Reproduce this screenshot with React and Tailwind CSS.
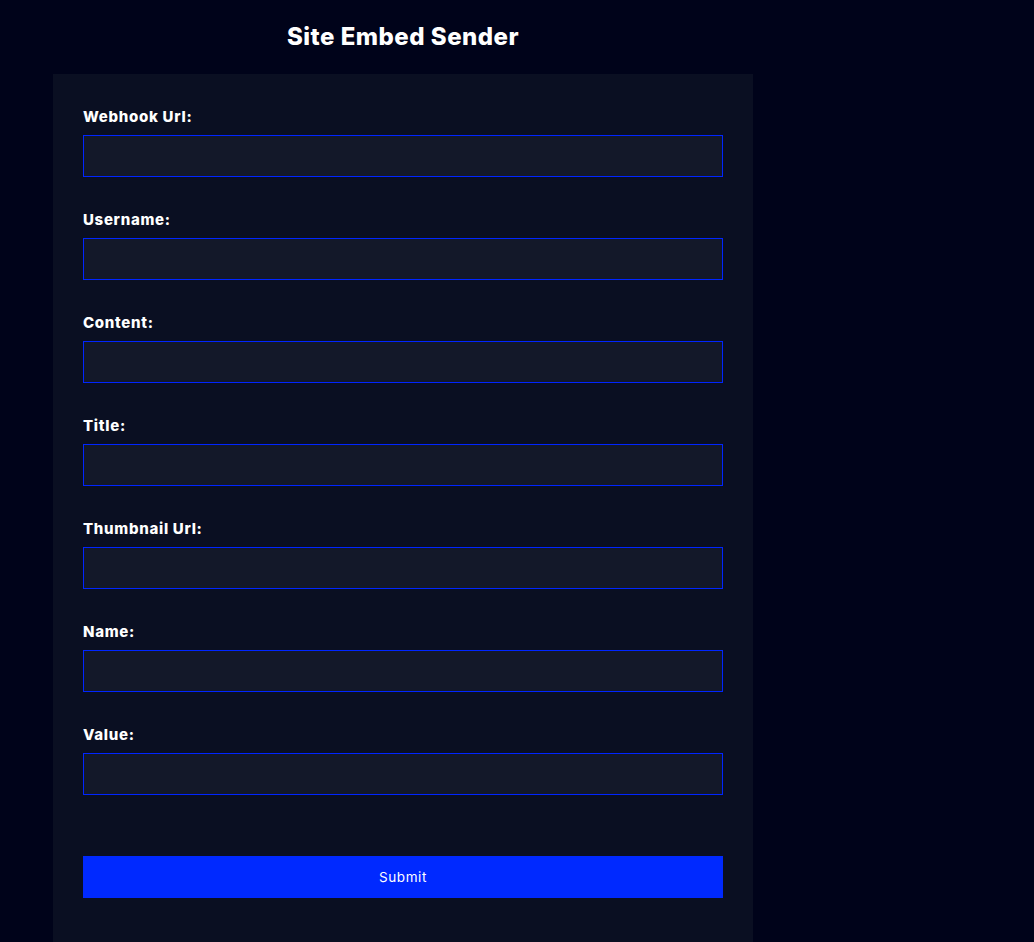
import React from 'react';

const FIELDS = ['Webhook Url:', 'Username:', 'Content:', 'Title:', 'Thumbnail Url:', 'Name:', 'Value:'];

export default function App() {
  return (
    <div
      className="min-h-screen bg-[#00031a] text-white"
      style={{ fontFamily: 'Inter, "Noto Sans", sans-serif' }}
    >
      <div className="ml-[53px] w-[700px]">
        <h1 className="h-[74px] flex items-center justify-center text-[24px] font-extrabold tracking-[0.5px] pb-[1px]">
          Site Embed Sender
        </h1>
        <form
          className="bg-[#0a0f22] px-[30px] pt-[30px] pb-[44px] min-h-[868px]"
          onSubmit={(e) => e.preventDefault()}
        >
          {FIELDS.map((label, i) => (
            <div key={label} className={i < FIELDS.length - 1 ? 'mb-[30px]' : ''}>
              <label className="block h-[24px] leading-[25px] text-[15px] font-extrabold tracking-[0.7px]">
                {label}
              </label>
              <input
                type="text"
                className="mt-[7px] block w-full h-[42px] bg-[#131829] border border-[#0025ff] outline-none px-3 text-white"
              />
            </div>
          ))}
          <button
            type="submit"
            className="mt-[61px] w-full h-[42px] bg-[#0029ff] text-white text-[13.5px] tracking-[0.6px]"
          >
            Submit
          </button>
        </form>
      </div>
    </div>
  );
}
